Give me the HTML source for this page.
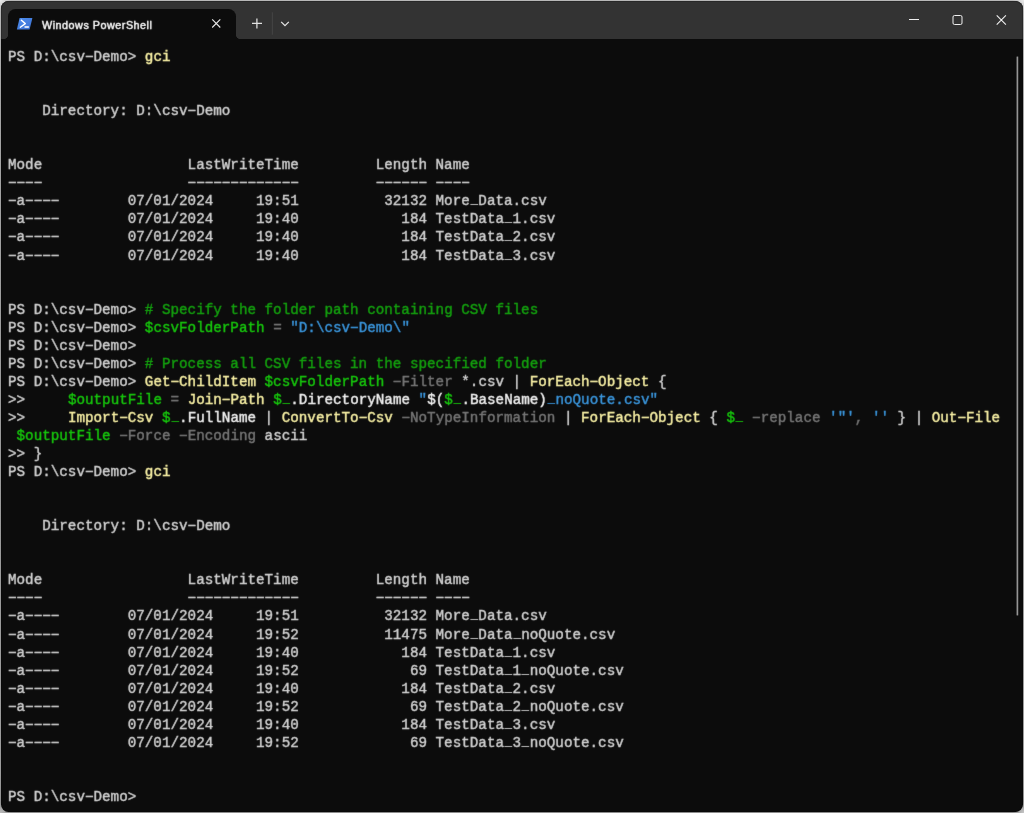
<!DOCTYPE html>
<html><head><meta charset="utf-8"><title>Windows PowerShell</title>
<style>
html,body{margin:0;padding:0;}
body{width:1024px;height:813px;overflow:hidden;position:relative;
 background:
  radial-gradient(circle at 0 0,#ececec 0,rgba(236,236,236,0) 11px),
  radial-gradient(circle at 100% 0,#ececec 0,rgba(236,236,236,0) 11px),
  radial-gradient(circle at 100% 100%,#c8c8c8 0,rgba(200,200,200,0) 11px),
  radial-gradient(circle at 0 100%,#bcbcbc 0,rgba(188,188,188,0) 11px),
  linear-gradient(180deg,#b8b8b8 0,#b8b8b8 1px,#a6a6a6 12%,#9a9a9a 50%,#9c9c9c 95%,#8c8c8c 100%);
 font-family:"Liberation Sans",sans-serif;}
#win{position:absolute;left:1px;top:1px;width:1022px;height:811px;border-radius:7.5px;background:#0c0c0c;overflow:hidden;}
#win:after{content:"";position:absolute;left:0;top:0;right:0;bottom:0;border-radius:7.5px;box-shadow:inset 0 0 0 1px rgba(0,0,0,0.2);pointer-events:none;z-index:9;}
#bar{position:absolute;left:0;top:0;width:1022px;height:37.6px;background:#333333;}
#tab{position:absolute;left:7.3px;top:7.9px;width:227.9px;height:29.7px;background:#0c0c0c;border-radius:7.5px 7.5px 0 0;}
#tab:before,#tab:after{content:"";position:absolute;bottom:0;width:4px;height:4px;}
#tab:before{left:-4px;background:radial-gradient(circle at 0 0,rgba(12,12,12,0) 3.6px,#0c0c0c 4.3px);}
#tab:after{right:-4px;background:radial-gradient(circle at 100% 0,rgba(12,12,12,0) 3.6px,#0c0c0c 4.3px);}
#title{position:absolute;left:41px;top:17.1px;font-size:10.8px;letter-spacing:0.5px;line-height:14px;color:#ffffff;white-space:pre;will-change:transform;-webkit-text-stroke:0.4px;filter:url(#soft);}
pre{position:absolute;margin:0;left:7.2px;top:46.9px;font-family:"Liberation Mono",monospace;font-size:14.25px;line-height:18.0488px;color:#d2d2d2;white-space:pre;will-change:transform;-webkit-text-stroke:0.4px;filter:url(#soft);}
.y{color:#f9f1a5}.g{color:#16c60c}.c{color:#13a10e}.s{color:#3a96dd}.p{color:#767676}.w{color:#f2f2f2}
pre i{font-style:normal;display:inline-block;transform:translateY(-1.6px) scaleX(0.84);}
#sb{position:absolute;left:1015px;top:56px;width:3px;height:558px;background:linear-gradient(90deg,#484848 0,#484848 1px,#959595 1px,#959595 2px,#2a2a2a 2px,#2a2a2a 3px);}
#sb:before,#sb:after{content:"";position:absolute;left:0;width:3px;height:1px;background:linear-gradient(90deg,#222 0,#222 1px,#4a4a4a 1px,#4a4a4a 2px,#181818 2px,#181818 3px);}
#sb:before{top:-1px}#sb:after{bottom:-1px}
svg{position:absolute;overflow:visible}
</style></head><body>
<svg width="0" height="0" style="position:absolute"><defs><filter id="soft" x="0" y="0" width="100%" height="100%" color-interpolation-filters="sRGB"><feConvolveMatrix order="3" kernelMatrix="0.012 0.06 0.012 0.06 0.712 0.06 0.012 0.06 0.012" edgeMode="none"/></filter></defs></svg>
<div id="win">
<div id="bar"></div>
<div id="tab"></div>
<svg id="ico" style="left:0;top:0" width="1022" height="38" viewBox="1 1 1022 38">
 <!-- powershell icon -->
 <defs><linearGradient id="pg" x1="0" y1="0" x2="1" y2="1"><stop offset="0" stop-color="#4f8ff0"/><stop offset="1" stop-color="#3a6fd0"/></linearGradient></defs>
 <path d="M19.6 18 L32.4 18 L29.6 29.4 L16.9 29.4 Z" fill="url(#pg)"/>
 <path d="M21.4 20.3 L25.3 23.6 L20.3 27.2" fill="none" stroke="#fff" stroke-width="1.4" stroke-linecap="round" stroke-linejoin="round"/>
 <path d="M25 27 L28.4 27" fill="none" stroke="#fff" stroke-width="1.3" stroke-linecap="round"/>
 <!-- tab close -->
 <path d="M212.2 19.4 L220.3 27.5 M220.3 19.4 L212.2 27.5" stroke="#e8e8e8" stroke-width="1.1" fill="none"/>
 <!-- plus -->
 <path d="M252 23.45 L262 23.45 M256.9 18.5 L256.9 28.6" stroke="#e2e2e2" stroke-width="1.25" fill="none"/>
 <!-- divider -->
 <path d="M272.4 12.2 L272.4 34.7" stroke="#424242" stroke-width="1.2" fill="none"/>
 <!-- chevron -->
 <path d="M281.2 21.9 L285 25.65 L288.8 21.9" stroke="#e4e4e4" stroke-width="1.3" fill="none"/>
 <!-- min -->
 <path d="M909 19.5 L919 19.5" stroke="#f0f0f0" stroke-width="1" fill="none"/>
 <!-- max -->
 <rect x="953" y="15.5" width="9" height="9" rx="1.5" stroke="#f0f0f0" stroke-width="1" fill="none"/>
 <!-- close -->
 <path d="M996.7 15.4 L1005.9 24.6 M1005.9 15.4 L996.7 24.6" stroke="#f4f4f4" stroke-width="1.05" fill="none"/>
</svg>
<div id="title">Windows PowerShell</div>
<pre>PS D:\csv−Demo&gt; <span class="y">gci</span>


    Directory: D:\csv−Demo


Mode                 LastWriteTime         Length Name
−−−−                 −−−−−−−−−−−−−         −−−−−− −−−−
−a−−−−        07/01/2024     19:51          32132 More<i>_</i>Data.csv
−a−−−−        07/01/2024     19:40            184 TestData<i>_</i>1.csv
−a−−−−        07/01/2024     19:40            184 TestData<i>_</i>2.csv
−a−−−−        07/01/2024     19:40            184 TestData<i>_</i>3.csv


PS D:\csv−Demo&gt; <span class="c"># Specify the folder path containing CSV files</span>
PS D:\csv−Demo&gt; <span class="g">$csvFolderPath</span> <span class="p">=</span> <span class="s">"D:\csv−Demo\"</span>
PS D:\csv−Demo&gt;
PS D:\csv−Demo&gt; <span class="c"># Process all CSV files in the specified folder</span>
PS D:\csv−Demo&gt; <span class="y">Get−ChildItem</span> <span class="g">$csvFolderPath</span> <span class="p">−Filter</span> *.csv | <span class="y">ForEach−Object</span> {
&gt;&gt;     <span class="g">$outputFile</span> <span class="p">=</span> <span class="y">Join−Path</span> <span class="g">$<i>_</i></span><span class="w">.DirectoryName</span> <span class="s">"</span><span class="w">$(</span><span class="g">$<i>_</i></span><span class="w">.BaseName)</span><span class="s"><i>_</i>noQuote.csv"</span>
&gt;&gt;     <span class="y">Import−Csv</span> <span class="g">$<i>_</i></span><span class="w">.FullName</span> | <span class="y">ConvertTo−Csv</span> <span class="p">−NoTypeInformation</span> | <span class="y">ForEach−Object</span> { <span class="g">$<i>_</i></span> <span class="p">−replace</span> <span class="s">'"'</span><span class="p">,</span> <span class="s">''</span> } | <span class="y">Out−File</span>
 <span class="g">$outputFile</span> <span class="p">−Force</span> <span class="p">−Encoding</span> ascii
&gt;&gt; }
PS D:\csv−Demo&gt; <span class="y">gci</span>


    Directory: D:\csv−Demo


Mode                 LastWriteTime         Length Name
−−−−                 −−−−−−−−−−−−−         −−−−−− −−−−
−a−−−−        07/01/2024     19:51          32132 More<i>_</i>Data.csv
−a−−−−        07/01/2024     19:52          11475 More<i>_</i>Data<i>_</i>noQuote.csv
−a−−−−        07/01/2024     19:40            184 TestData<i>_</i>1.csv
−a−−−−        07/01/2024     19:52             69 TestData<i>_</i>1<i>_</i>noQuote.csv
−a−−−−        07/01/2024     19:40            184 TestData<i>_</i>2.csv
−a−−−−        07/01/2024     19:52             69 TestData<i>_</i>2<i>_</i>noQuote.csv
−a−−−−        07/01/2024     19:40            184 TestData<i>_</i>3.csv
−a−−−−        07/01/2024     19:52             69 TestData<i>_</i>3<i>_</i>noQuote.csv


PS D:\csv−Demo&gt;</pre>
<div id="sb"></div>
</div>
</body></html>
